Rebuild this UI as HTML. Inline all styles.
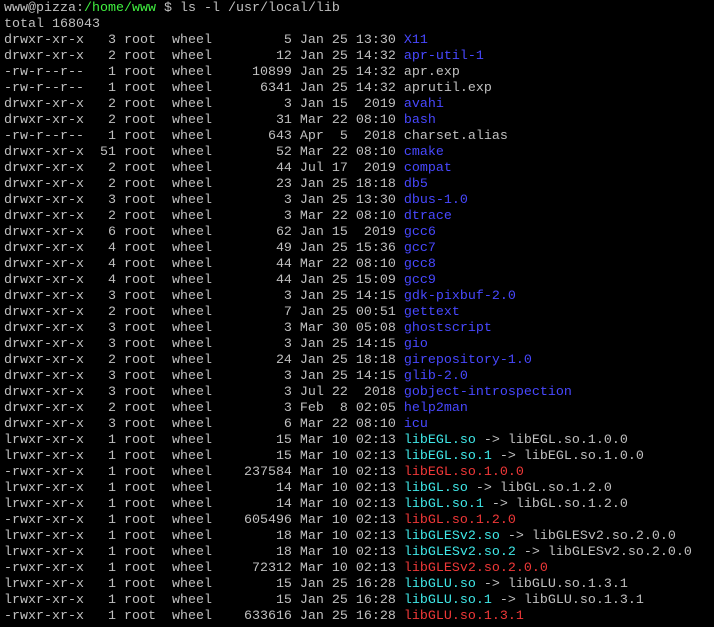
<!DOCTYPE html>
<html><head><meta charset="utf-8"><style>
html,body{margin:0;padding:0;background:#000;width:714px;height:627px;overflow:hidden}
pre{margin:0;padding:1px 0 0 4px;font-family:"Liberation Mono",monospace;font-size:13.33px;line-height:16px;color:#c0c0c0;white-space:pre}
.g{color:#40f040}.b{color:#4848ff}.c{color:#40e8e8}.r{color:#f03838}
</style></head><body><pre>www@pizza:<span class="g">/home/www</span> $ ls -l /usr/local/lib
total 168043
drwxr-xr-x   3 root  wheel         5 Jan 25 13:30 <span class="b">X11</span>
drwxr-xr-x   2 root  wheel        12 Jan 25 14:32 <span class="b">apr-util-1</span>
-rw-r--r--   1 root  wheel     10899 Jan 25 14:32 apr.exp
-rw-r--r--   1 root  wheel      6341 Jan 25 14:32 aprutil.exp
drwxr-xr-x   2 root  wheel         3 Jan 15  2019 <span class="b">avahi</span>
drwxr-xr-x   2 root  wheel        31 Mar 22 08:10 <span class="b">bash</span>
-rw-r--r--   1 root  wheel       643 Apr  5  2018 charset.alias
drwxr-xr-x  51 root  wheel        52 Mar 22 08:10 <span class="b">cmake</span>
drwxr-xr-x   2 root  wheel        44 Jul 17  2019 <span class="b">compat</span>
drwxr-xr-x   2 root  wheel        23 Jan 25 18:18 <span class="b">db5</span>
drwxr-xr-x   3 root  wheel         3 Jan 25 13:30 <span class="b">dbus-1.0</span>
drwxr-xr-x   2 root  wheel         3 Mar 22 08:10 <span class="b">dtrace</span>
drwxr-xr-x   6 root  wheel        62 Jan 15  2019 <span class="b">gcc6</span>
drwxr-xr-x   4 root  wheel        49 Jan 25 15:36 <span class="b">gcc7</span>
drwxr-xr-x   4 root  wheel        44 Mar 22 08:10 <span class="b">gcc8</span>
drwxr-xr-x   4 root  wheel        44 Jan 25 15:09 <span class="b">gcc9</span>
drwxr-xr-x   3 root  wheel         3 Jan 25 14:15 <span class="b">gdk-pixbuf-2.0</span>
drwxr-xr-x   2 root  wheel         7 Jan 25 00:51 <span class="b">gettext</span>
drwxr-xr-x   3 root  wheel         3 Mar 30 05:08 <span class="b">ghostscript</span>
drwxr-xr-x   3 root  wheel         3 Jan 25 14:15 <span class="b">gio</span>
drwxr-xr-x   2 root  wheel        24 Jan 25 18:18 <span class="b">girepository-1.0</span>
drwxr-xr-x   3 root  wheel         3 Jan 25 14:15 <span class="b">glib-2.0</span>
drwxr-xr-x   3 root  wheel         3 Jul 22  2018 <span class="b">gobject-introspection</span>
drwxr-xr-x   2 root  wheel         3 Feb  8 02:05 <span class="b">help2man</span>
drwxr-xr-x   3 root  wheel         6 Mar 22 08:10 <span class="b">icu</span>
lrwxr-xr-x   1 root  wheel        15 Mar 10 02:13 <span class="c">libEGL.so</span> -> libEGL.so.1.0.0
lrwxr-xr-x   1 root  wheel        15 Mar 10 02:13 <span class="c">libEGL.so.1</span> -> libEGL.so.1.0.0
-rwxr-xr-x   1 root  wheel    237584 Mar 10 02:13 <span class="r">libEGL.so.1.0.0</span>
lrwxr-xr-x   1 root  wheel        14 Mar 10 02:13 <span class="c">libGL.so</span> -> libGL.so.1.2.0
lrwxr-xr-x   1 root  wheel        14 Mar 10 02:13 <span class="c">libGL.so.1</span> -> libGL.so.1.2.0
-rwxr-xr-x   1 root  wheel    605496 Mar 10 02:13 <span class="r">libGL.so.1.2.0</span>
lrwxr-xr-x   1 root  wheel        18 Mar 10 02:13 <span class="c">libGLESv2.so</span> -> libGLESv2.so.2.0.0
lrwxr-xr-x   1 root  wheel        18 Mar 10 02:13 <span class="c">libGLESv2.so.2</span> -> libGLESv2.so.2.0.0
-rwxr-xr-x   1 root  wheel     72312 Mar 10 02:13 <span class="r">libGLESv2.so.2.0.0</span>
lrwxr-xr-x   1 root  wheel        15 Jan 25 16:28 <span class="c">libGLU.so</span> -> libGLU.so.1.3.1
lrwxr-xr-x   1 root  wheel        15 Jan 25 16:28 <span class="c">libGLU.so.1</span> -> libGLU.so.1.3.1
-rwxr-xr-x   1 root  wheel    633616 Jan 25 16:28 <span class="r">libGLU.so.1.3.1</span></pre></body></html>
